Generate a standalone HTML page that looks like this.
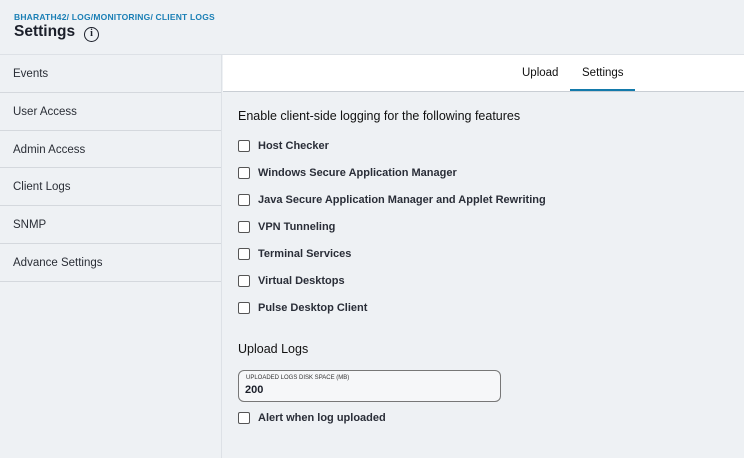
<!DOCTYPE html>
<html><head><style>
*{box-sizing:border-box;margin:0;padding:0}
body{width:744px;height:458px;background:#eef1f4;font-family:"Liberation Sans",sans-serif;color:#1b1f2a;position:relative;overflow:hidden}
.bc{position:absolute;left:14px;top:12px;font-size:8.5px;font-weight:bold;color:#1a7fb5;letter-spacing:.2px}
.ttl{position:absolute;left:14px;top:23px;font-size:15.5px;font-weight:bold}
.info{position:absolute;left:84px;top:27px;width:15px;height:15px;border:1.6px solid #1b1f2a;border-radius:50%;font-size:10px;font-weight:bold;text-align:center;line-height:12px;font-family:"Liberation Serif",serif}
.top{position:absolute;left:0;top:54px;width:744px;border-top:1px solid #dde1e6}
.side{position:absolute;left:0;top:55px;width:222px;height:403px;border-right:1px solid #dde1e6}
.si{height:37.8px;border-bottom:1px solid #d4d8dd;font-size:11.5px;padding-left:13px;line-height:38px;color:#2a2e36}
.tabs{position:absolute;left:223px;top:55px;width:521px;height:37px;background:#fff;border-bottom:1px solid #c9ced4}
.tab{position:absolute;top:12px;font-size:11.5px;color:#111}
.ul{position:absolute;left:570px;top:89px;width:65px;height:2px;background:#137aab}
.h{position:absolute;left:238px;font-size:12.5px;color:#111}
.cb{position:absolute;left:238px;width:12px;height:12px;border:1.3px solid #555;border-radius:2px;background:#fff}
.lb{position:absolute;left:258px;font-size:11px;font-weight:bold;color:#2a2e38}
.inp{position:absolute;left:238px;top:370px;width:263px;height:32px;border:1px solid #777;border-radius:6px;background:#f6f7f9}
.inp .s{position:absolute;left:7px;top:4px;font-size:6px;color:#333}
.inp .v{position:absolute;left:6px;top:13px;font-size:11px;font-weight:bold}
</style></head><body>
<div class="bc">BHARATH42/ LOG/MONITORING/ CLIENT LOGS</div>
<div class="ttl">Settings</div><div class="info">i</div>
<div class="top"></div>
<div class="side">
<div class="si">Events</div><div class="si">User Access</div><div class="si">Admin Access</div><div class="si">Client Logs</div><div class="si">SNMP</div><div class="si">Advance Settings</div>
</div>
<div class="tabs"><span class="tab" style="left:299px;top:12px">Upload</span><span class="tab" style="left:359px;top:12px">Settings</span></div>
<div class="ul"></div>
<div class="h" style="top:109px">Enable client-side logging for the following features</div>
<div class="cb" style="top:140px"></div><div class="lb" style="top:140px">Host Checker</div>
<div class="cb" style="top:167px"></div><div class="lb" style="top:167px">Windows Secure Application Manager</div>
<div class="cb" style="top:194px"></div><div class="lb" style="top:194px">Java Secure Application Manager and Applet Rewriting</div>
<div class="cb" style="top:221px"></div><div class="lb" style="top:221px">VPN Tunneling</div>
<div class="cb" style="top:248px"></div><div class="lb" style="top:248px">Terminal Services</div>
<div class="cb" style="top:275px"></div><div class="lb" style="top:275px">Virtual Desktops</div>
<div class="cb" style="top:302px"></div><div class="lb" style="top:302px">Pulse Desktop Client</div>
<div class="h" style="top:342px">Upload Logs</div>
<div class="inp"><div class="s">UPLOADED LOGS DISK SPACE (MB)</div><div class="v">200</div></div>
<div class="cb" style="top:412px"></div><div class="lb" style="top:412px">Alert when log uploaded</div>
</body></html>
